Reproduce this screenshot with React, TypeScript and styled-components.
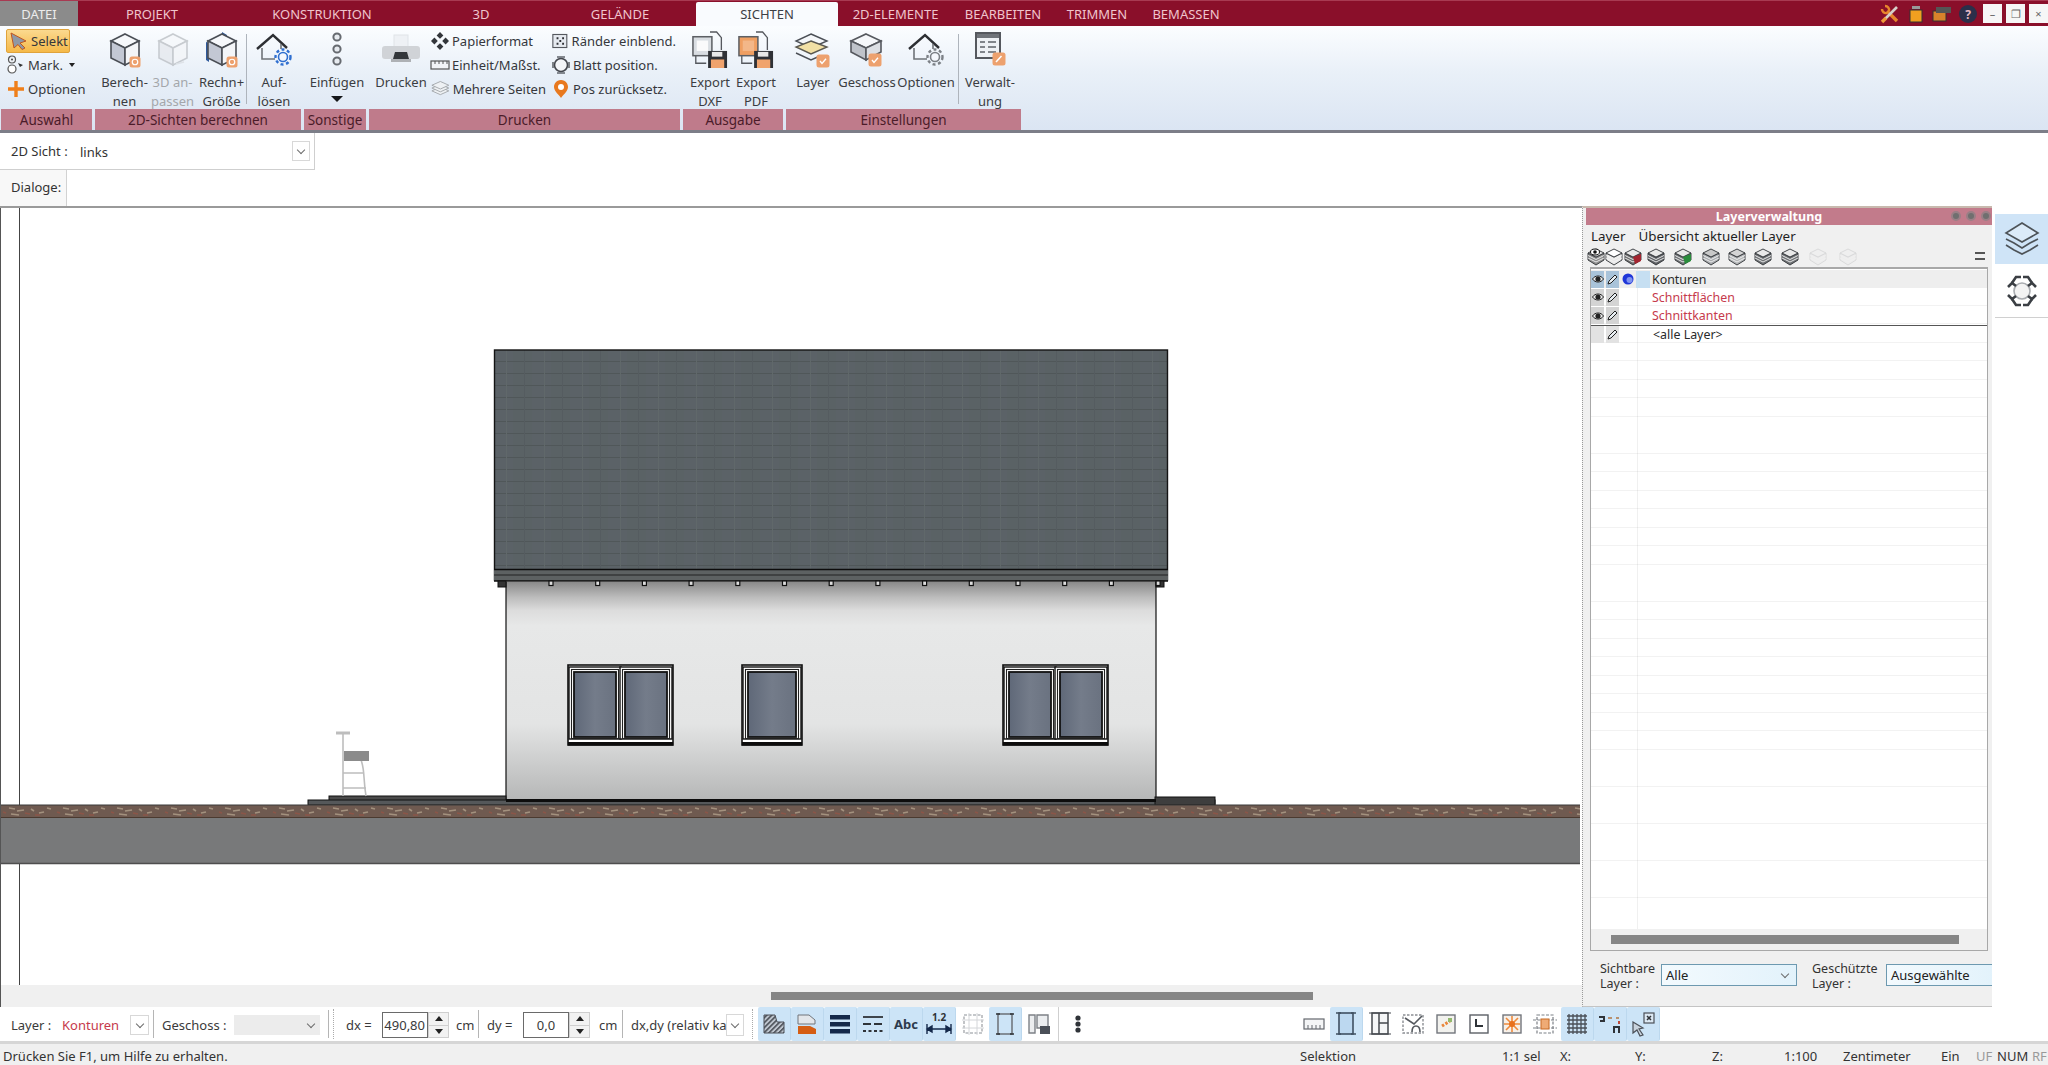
import React from 'react';
import styled, { createGlobalStyle } from 'styled-components';

const GlobalStyle = createGlobalStyle`
  html, body {
    margin: 0;
    padding: 0;
    background: #fff;
    overflow: hidden;
  }
  * { box-sizing: border-box; }
  body {
    font-family: "Noto Sans", "Open Sans", "Liberation Sans", sans-serif;
    font-size: 13px;
    color: #333;
  }
`;

/* ---------- ribbon icons ---------- */

const Badge = ({ x, y, r = 5.5, kind = 'ring' }: { x: number; y: number; r?: number; kind?: string }) => (
  <g>
    <rect x={x - r} y={y - r} width={r * 2} height={r * 2} rx={2.5} fill="#eda16e" />
    {kind === 'ring' && <circle cx={x} cy={y} r={r * 0.5} fill="none" stroke="#fff" strokeWidth={1.2} />}
    {kind === 'check' && <path d={`M${x - 3} ${y} l2 2.4 l4 -4.6`} fill="none" stroke="#fff" strokeWidth={1.4} />}
    {kind === 'pen' && <path d={`M${x - 3} ${y + 3} l5.5 -6`} fill="none" stroke="#fff" strokeWidth={1.6} />}
  </g>
);

const CubeIcon = ({ faded, wide }: { faded?: boolean; wide?: boolean }) => {
  const stroke = faded ? '#b9bdc2' : '#4b4f56';
  return (
    <svg width="38" height="38" viewBox="0 0 38 38" opacity={faded ? 0.75 : 1}>
      {wide && <path d="M19 1 L24 4 V8 L19 5Z M3 11 V29 L6 31 V12Z" fill="#2f5a9c" />}
      <path d="M19 3 L33 10 L19 17 L5 10Z" fill="#f6f8fb" stroke={stroke} strokeWidth="1.6" />
      <path d="M5 10 L19 17 V34 L5 27Z" fill={faded ? '#e5e8ed' : '#c3c8d4'} stroke={stroke} strokeWidth="1.6" />
      <path d="M33 10 L19 17 V34 L33 27Z" fill="#f3f5f8" stroke={stroke} strokeWidth="1.6" />
      {!faded && <Badge x={29} y={31} r={5.5} />}
      {faded && <path d="M22 33 l8 -2" stroke="#d9dde2" strokeWidth="1.5" />}
    </svg>
  );
};

const GearShape = ({ x, y, r, color }: { x: number; y: number; r: number; color: string }) => (
  <g fill="none" stroke={color} strokeWidth="1.6">
    <circle cx={x} cy={y} r={r} fill="#f5f8fd" />
    <circle cx={x} cy={y} r={r + 3} strokeDasharray="3 2.6" strokeWidth="2.4" />
  </g>
);

const HouseIcon = ({ gear }: { gear: string }) => (
  <svg width="38" height="38" viewBox="0 0 38 38">
    <path d="M2 18 L18 4 L32 17" fill="none" stroke="#2d2f33" strokeWidth="2.4" />
    <path d="M7 17 V28 H20 M26 13 V18" fill="none" stroke="#6f7378" strokeWidth="1.6" />
    <GearShape x={28} y={26} r={4.5} color={gear} />
  </svg>
);

const DotsIcon = () => (
  <svg width="14" height="38" viewBox="0 0 14 38">
    {[6, 18, 30].map(y => (
      <circle key={y} cx="7" cy={y} r="3.6" fill="#e7ebf0" stroke="#666a70" strokeWidth="2" />
    ))}
  </svg>
);

const PrinterIcon = () => (
  <svg width="42" height="38" viewBox="0 0 42 38">
    <rect x="14" y="4" width="14" height="16" fill="#eef1f5" stroke="#dfe3e8" />
    <rect x="2" y="15" width="38" height="13" rx="3" fill="#d0d3d7" />
    <path d="M13 28 L15 21 H27 L29 28Z" fill="#33363a" />
    <rect x="11" y="28" width="20" height="3" fill="#aeb1b5" />
  </svg>
);

const ExportIcon = ({ tint, label }: { tint: string; label: string }) => (
  <svg width="36" height="38" viewBox="0 0 38 40">
    <path d="M19 1 H26 L31 7 V20 M4 24 V34 H15" fill="none" stroke="#55585e" strokeWidth="1.4" />
    <rect x="1" y="6" width="20" height="20" fill={tint} stroke="#5c5f64" strokeWidth="1.6" />
    <rect x="5" y="10" width="12" height="11" fill="#fff" opacity={label === 'D' ? 0.85 : 0.25} />
    <rect x="17" y="21" width="20" height="18" fill="#2f3136" />
    <rect x="20" y="30" width="14" height="9" fill="#f0a36d" />
    <rect x="21" y="22" width="11" height="5" fill="#e8e8e8" />
  </svg>
);

const LayerBigIcon = () => (
  <svg width="38" height="38" viewBox="0 0 38 38">
    <path d="M17 3 L33 10 L17 17 L2 10Z" fill="#f5f7fa" stroke="#4b4f56" strokeWidth="1.4" />
    <path d="M17 10 L33 16 L17 23 L2 16Z" fill="#f2e0a5" stroke="#5a5850" strokeWidth="1.4" />
    <path d="M2 22 L17 29 L26 25" fill="none" stroke="#4b4f56" strokeWidth="1.4" />
    <Badge x={29} y={30} r={6.5} kind="check" />
  </svg>
);

const FloorIcon = () => (
  <svg width="38" height="38" viewBox="0 0 38 38">
    <path d="M18 3 L33 10 L18 17 L3 10Z" fill="#f5f7fa" stroke="#55585e" strokeWidth="1.6" />
    <path d="M3 10 V21 L18 29 V17Z" fill="#bfc3ca" stroke="#55585e" strokeWidth="1.6" />
    <path d="M33 10 V21 L18 29 V17Z" fill="#dcdfe4" stroke="#55585e" strokeWidth="1.6" />
    <Badge x={27} y={29} r={6.5} kind="check" />
  </svg>
);

const ManageIcon = () => (
  <svg width="38" height="38" viewBox="0 0 38 38">
    <rect x="5" y="2" width="24" height="25" fill="#eef1f5" stroke="#55585e" strokeWidth="2" />
    <rect x="6" y="3" width="22" height="4" fill="#70747a" />
    {[11, 16, 21].map(y => (
      <path key={y} d={`M9 ${y} h5 M17 ${y} h8`} stroke="#5e6268" strokeWidth="1.6" />
    ))}
    <Badge x={28} y={28} r={6.5} kind="pen" />
  </svg>
);

const SmallIcon = ({ kind }: { kind: string }) => {
  switch (kind) {
    case 'cursor':
      return (
        <svg width="20" height="20" viewBox="0 0 20 20">
          <path d="M2 2 L17 10 L11 12 L16 17 L13 18.5 L9 13.5 L5 17Z" fill="#8f98a4" stroke="#c0561e" strokeWidth="1" />
        </svg>
      );
    case 'mark':
      return (
        <svg width="20" height="20" viewBox="0 0 20 20">
          <circle cx="6" cy="4.5" r="3.5" fill="#eef1f5" stroke="#555" strokeWidth="1.2" />
          <circle cx="6" cy="4.5" r="1" fill="#444" />
          <circle cx="6" cy="14" r="4" fill="#fff" stroke="#555" strokeWidth="1.2" />
          <path d="M12 8 l5 2 l-3 2Z" fill="#333" />
        </svg>
      );
    case 'plus':
      return (
        <svg width="20" height="20" viewBox="0 0 20 20">
          <path d="M10 2 V18 M2 10 H18" stroke="#ef7f1a" strokeWidth="3.4" />
        </svg>
      );
    case 'format':
      return (
        <svg width="20" height="20" viewBox="0 0 20 20">
          <path d="M10 1 l3.4 3.4 l-3.4 3.4 l-3.4 -3.4Z M10 12.2 l3.4 3.4 l-3.4 3.4 l-3.4 -3.4Z M4.4 6.6 l3.4 3.4 l-3.4 3.4 l-3.4 -3.4Z M15.6 6.6 l3.4 3.4 l-3.4 3.4 l-3.4 -3.4Z" fill="#33363b" />
        </svg>
      );
    case 'ruler':
      return (
        <svg width="20" height="20" viewBox="0 0 20 20">
          <rect x="1" y="6" width="18" height="8" fill="#f2f4f7" stroke="#555" strokeWidth="1.2" />
          <path d="M5 6 v3 M9 6 v3 M13 6 v3 M17 6 v3" stroke="#555" />
        </svg>
      );
    case 'pages':
      return (
        <svg width="22" height="20" viewBox="0 0 22 20">
          {[11, 8, 5].map(y => (
            <path key={y} d={`M11 ${y - 3} L20 ${y + 1} L11 ${y + 5} L2 ${y + 1}Z`} fill="#eef1f4" stroke="#a3a7ac" />
          ))}
        </svg>
      );
    case 'margins':
      return (
        <svg width="20" height="20" viewBox="0 0 20 20">
          <rect x="2" y="3" width="15" height="14" fill="#e6eaf0" stroke="#55585e" strokeWidth="1.2" />
          <path d="M6 7 h2 M12 7 h2 M6 13 h2 M12 13 h2 M10 9 v2" stroke="#2f3136" strokeWidth="2" />
        </svg>
      );
    case 'position':
      return (
        <svg width="20" height="20" viewBox="0 0 20 20">
          <circle cx="10" cy="10" r="6.5" fill="#f3f5f8" stroke="#44474d" strokeWidth="1.6" />
          <path d="M6 2 h8 M2 7 v6 M18 7 v6 M6 18 h8" stroke="#62666c" strokeWidth="1.6" />
        </svg>
      );
    default:
      return (
        <svg width="20" height="20" viewBox="0 0 20 20">
          <path d="M10 1 C5 1 3 5 3 8 C3 12 8 16 10 19 C12 16 17 12 17 8 C17 5 15 1 10 1Z" fill="#e8781e" />
          <circle cx="10" cy="8" r="3" fill="#fff" />
        </svg>
      );
  }
};

/* ---------- bottom toolbar icons ---------- */

const ToolGlyph = ({ kind }: { kind: string }) => {
  const g = '#64686e';
  const d = '#2f3338';
  switch (kind) {
    case 'hatch':
      return (
        <svg width="22" height="22" viewBox="0 0 22 22">
          <defs>
            <pattern id="hatchfill" width="3.5" height="3.5" patternUnits="userSpaceOnUse" patternTransform="rotate(45)">
              <rect width="3.5" height="3.5" fill="#bcc3cc" />
              <rect width="1.4" height="3.5" fill="#3d4249" />
            </pattern>
          </defs>
          <path d="M1 2 H12 L14 9 H21 V20 H1Z" fill="url(#hatchfill)" stroke="#4b4f56" />
        </svg>
      );
    case 'fill':
      return (
        <svg width="22" height="22" viewBox="0 0 22 22">
          <path d="M2 2 H13 L19 7 V11 H2Z" fill="#e3e6ea" stroke="#70747a" />
          <path d="M2 13 H14 L20 16 V21 H2Z" fill="#d55e14" />
        </svg>
      );
    case 'thick':
      return (
        <svg width="22" height="20" viewBox="0 0 22 20">
          <rect x="1" y="1" width="20" height="4.5" fill="#15294a" />
          <rect x="1" y="8" width="20" height="4.5" fill="#15294a" />
          <rect x="1" y="15" width="20" height="4.5" fill="#15294a" />
        </svg>
      );
    case 'dash':
      return (
        <svg width="22" height="20" viewBox="0 0 22 20">
          <path d="M1 3 H21" stroke={d} strokeWidth="1.8" />
          <path d="M1 10 H21" stroke={d} strokeWidth="1.8" strokeDasharray="8 3" />
          <path d="M1 17 H21" stroke={d} strokeWidth="1.8" strokeDasharray="3 2.5" />
        </svg>
      );
    case 'dim':
      return (
        <svg width="28" height="26" viewBox="0 0 28 26">
          <text x="14" y="10" textAnchor="middle" fontSize="10" fontFamily="Noto Sans" fill="#2f3338">1.2</text>
          <path d="M2 13 V23 M26 13 V23 M2 18 H26 M2 18 l5 -3 v6Z M26 18 l-5 -3 v6Z" stroke="#15294a" strokeWidth="1.4" fill="#15294a" />
        </svg>
      );
    case 'frameFaded':
      return (
        <svg width="24" height="24" viewBox="0 0 24 24">
          <rect x="3" y="3" width="18" height="18" fill="none" stroke="#b3b6ba" strokeWidth="1.6" strokeDasharray="3 1.5" />
          <path d="M1 8 H23 M1 16 H23 M8 1 V23 M16 1 V23" stroke="#d4d6d9" />
        </svg>
      );
    case 'frame':
      return (
        <svg width="20" height="24" viewBox="0 0 20 24">
          <rect x="3" y="2" width="14" height="20" fill="none" stroke={g} strokeWidth="1.4" />
          <path d="M1 2 H5 M15 2 H19 M1 22 H5 M15 22 H19" stroke={d} strokeWidth="1.4" />
        </svg>
      );
    case 'sheets':
      return (
        <svg width="24" height="24" viewBox="0 0 24 24">
          <path d="M2 3 H8 V21 H2Z M10 3 H21 V16 H10Z" fill="#eceef0" stroke="#7d8187" strokeWidth="1.4" />
          <rect x="13" y="14" width="10" height="8" fill="#4b5058" />
        </svg>
      );
    case 'grip':
      return (
        <svg width="8" height="18" viewBox="0 0 8 18">
          {[3, 9, 15].map(y => <circle key={y} cx="4" cy={y} r="2.6" fill="#2f3338" />)}
        </svg>
      );
    case 'rule':
      return (
        <svg width="22" height="14" viewBox="0 0 22 14">
          <rect x="1" y="2" width="20" height="10" fill="#f4f5f6" stroke={g} strokeWidth="1.2" />
          <path d="M5 8 v4 M9 8 v4 M13 8 v4 M17 8 v4" stroke={g} />
        </svg>
      );
    case 'page':
      return (
        <svg width="22" height="26" viewBox="0 0 22 26">
          <rect x="4" y="2" width="14" height="21" fill="#bcd8f0" stroke="#3f5062" strokeWidth="1.6" />
          <path d="M1 2 H6 M16 2 H21 M1 23 H6 M16 23 H21" stroke="#3f5062" strokeWidth="1.6" />
        </svg>
      );
    case 'plan':
      return (
        <svg width="24" height="26" viewBox="0 0 24 26">
          <path d="M4 2 H20 V23 H4Z M11 2 V23 M11 12 H20" fill="#f5f6f7" stroke="#44484e" strokeWidth="1.5" />
          <path d="M1 2 H23 M1 23 H23" stroke="#44484e" strokeWidth="1.2" />
        </svg>
      );
    case 'arc':
      return (
        <svg width="26" height="24" viewBox="0 0 26 24">
          <path d="M3 3 H23 V21 H3Z" fill="none" stroke="#8a8d92" strokeDasharray="2.5 1.5" strokeWidth="1.4" />
          <path d="M5 6 L14 12 L22 4 M12 20 C12 12 20 12 20 20" fill="none" stroke="#54585e" strokeWidth="1.6" />
        </svg>
      );
    case 'img':
      return (
        <svg width="24" height="24" viewBox="0 0 24 24">
          <rect x="3" y="3" width="18" height="18" fill="#f2f2ee" stroke="#72767c" strokeWidth="1.4" />
          <path d="M8 14 L16 9" stroke="#e9863a" strokeWidth="3" strokeDasharray="2.5 1.5" />
          <rect x="14" y="6" width="4" height="4" fill="#93b96f" />
        </svg>
      );
    case 'corner':
      return (
        <svg width="24" height="24" viewBox="0 0 24 24">
          <rect x="3" y="3" width="18" height="18" fill="#fff" stroke="#5c6066" strokeWidth="1.4" />
          <path d="M9 7 V14 H16" fill="none" stroke="#2f3338" strokeWidth="2" />
        </svg>
      );
    case 'burst':
      return (
        <svg width="24" height="24" viewBox="0 0 24 24">
          <rect x="3" y="3" width="18" height="18" fill="#f7f0e8" stroke="#72767c" strokeWidth="1.4" />
          <path d="M12 4 V20 M4 12 H20 M6 6 L18 18 M18 6 L6 18" stroke="#ee8a3c" strokeWidth="1.6" />
          <circle cx="12" cy="12" r="3" fill="#e8701c" />
        </svg>
      );
    case 'target':
      return (
        <svg width="26" height="24" viewBox="0 0 26 24">
          <path d="M5 3 H21 V21 H5Z M1 8 H25 M1 16 H25" fill="none" stroke="#7d8187" strokeWidth="1.2" strokeDasharray="3 1.5" />
          <rect x="9" y="7" width="8" height="10" fill="#efab75" stroke="#c76a24" />
        </svg>
      );
    case 'grid':
      return (
        <svg width="24" height="24" viewBox="0 0 24 24">
          <path d="M2 4 H22 M2 8 H22 M2 12 H22 M2 16 H22 M2 20 H22 M4 2 V22 M8 2 V22 M12 2 V22 M16 2 V22 M20 2 V22" stroke="#4a4f57" strokeWidth="1.3" />
        </svg>
      );
    case 'snap':
      return (
        <svg width="26" height="24" viewBox="0 0 26 24">
          <path d="M2 5 H7 V9 H3" fill="none" stroke="#2f3338" strokeWidth="2" />
          <path d="M11 6 H15 M19 6 H22" stroke="#b7906f" strokeWidth="2" />
          <path d="M17 21 V15 H22 V21" fill="none" stroke="#2f3338" strokeWidth="2" />
          <path d="M22 9 V12" stroke="#c04a3a" strokeWidth="2" />
        </svg>
      );
    default:
      return (
        <svg width="26" height="26" viewBox="0 0 26 26">
          <path d="M3 11 L13 17 L9 18 L13 24 L10 25 L7 19 L3 22Z" fill="#c9d3dd" stroke="#4b5058" strokeWidth="1.2" />
          <rect x="14" y="2" width="10" height="10" fill="#dce8f3" stroke="#4b5058" strokeWidth="1.2" />
          <path d="M17 5 L21 9 M21 5 L17 9" stroke="#2f3338" strokeWidth="1.5" />
        </svg>
      );
  }
};

const StackTool = ({ tone, top, faded, accent, eye }: { tone: string; top?: string; faded?: boolean; accent?: string; eye?: boolean }) => (
  <svg width="20" height="20" viewBox="0 0 20 20" opacity={faded ? 0.12 : 1}>
    <path d="M2 7 V14 L10 19 L18 14 V7 L10 11Z" fill={tone} stroke="#2f3236" strokeWidth="0.9" />
    <path d="M2 9.5 L10 13.5 L18 9.5 M2 12 L10 16 L18 12" fill="none" stroke="#f4f4f4" strokeWidth="0.9" />
    <path d="M10 3 L18 7 L10 11 L2 7Z" fill={top ?? '#e9e9e9'} stroke="#2f3236" strokeWidth="0.9" />
    {accent && <path d="M10 11 L18 8 V15 L12 18Z" fill={accent} />}
    {eye && (
      <g>
        <ellipse cx="9" cy="6" rx="4.5" ry="3" fill="#fff" stroke="#111" />
        <circle cx="9" cy="6" r="1.8" fill="#111" />
      </g>
    )}
  </svg>
);

/* ---------- tab bar ---------- */

const TabBar = styled.div`
  height: 26px;
  display: flex;
  align-items: stretch;
  background: #8a0f2a;
  border-top: 1px solid #a83a52;
`;

const Tab = styled.div<{ $w: number; $variant?: string }>`
  width: ${p => p.$w}px;
  display: flex;
  align-items: center;
  justify-content: center;
  font-size: 13px;
  white-space: nowrap;
  color: ${p => (p.$variant === 'active' ? '#3d3f45' : '#f0c4cd')};
  background: ${p =>
    p.$variant === 'file' ? '#8b8b8b' : p.$variant === 'active' ? '#f9fbfe' : 'transparent'};
  ${p => p.$variant === 'file' && 'color: #ececec;'}
  ${p => p.$variant === 'active' && 'border-radius: 2px 2px 0 0; margin-top: 1px;'}
`;

const WindowTools = styled.div`
  margin-left: auto;
  display: flex;
  align-items: center;
  gap: 4px;
`;

const TopGlyph = styled.span`
  width: 22px;
  height: 22px;
  display: flex;
  align-items: center;
  justify-content: center;
`;

const WinButton = styled.span`
  width: 19px;
  height: 19px;
  background: #f6f6f6;
  color: #666;
  font-size: 11px;
  display: flex;
  align-items: center;
  justify-content: center;
  line-height: 1;
`;

/* ---------- ribbon ---------- */

const Ribbon = styled.div`
  height: 107px;
  display: flex;
  padding-left: 1px;
  gap: 3px;
  background: linear-gradient(#fbfdff 0%, #e9f0f8 45%, #dbe5f3 100%);
  border-bottom: 3px solid #7c7e88;
`;

const Group = styled.div<{ $w: number }>`
  width: ${p => p.$w}px;
  display: flex;
  flex-direction: column;
`;

const GroupBody = styled.div<{ $pad?: number }>`
  height: 83px;
  display: flex;
  padding-left: ${p => p.$pad ?? 0}px;
`;

const GroupLabel = styled.div`
  height: 21px;
  background: #bf7b8b;
  color: #4b1b29;
  font-size: 13.5px;
  display: flex;
  align-items: center;
  justify-content: center;
`;

const BigButton = styled.div<{ $w: number; $faded?: boolean }>`
  width: ${p => p.$w}px;
  flex: none;
  display: flex;
  flex-direction: column;
  align-items: center;
  padding-top: 5px;
  font-size: 13px;
  line-height: 18.5px;
  text-align: center;
  color: ${p => (p.$faded ? '#a4a7ab' : '#3b3d42')};
  svg { flex: none; margin-bottom: 3px; }
`;

const ButtonCaption = styled.div`
  margin-top: auto;
  margin-bottom: -1px;
  white-space: pre-line;
  height: 37px;
`;

const Divider = styled.div`
  width: 1px;
  height: 70px;
  margin-top: 8px;
  background: #aeb4bc;
  flex: none;
`;

const SmallColumn = styled.div<{ $w: number; $pull?: number }>`
  width: ${p => p.$w}px;
  margin-left: ${p => -(p.$pull ?? 0)}px;
  flex: none;
  display: flex;
  flex-direction: column;
  padding-top: 3px;
`;

const SmallRow = styled.div<{ $selected?: boolean }>`
  height: 24px;
  display: flex;
  align-items: center;
  gap: 2px;
  font-size: 13px;
  white-space: nowrap;
  color: #35373c;
  padding-left: 5px;
  ${p =>
    p.$selected &&
    `
    background: linear-gradient(#fbd98f, #f5b949);
    border: 1px solid #e0a33b;
    border-radius: 2px;
    margin-left: 5px;
    padding-left: 2px;
    width: 64px;
  `}
`;

const Caret = styled.span`
  width: 0;
  height: 0;
  margin-left: 4px;
  border-left: 3px solid transparent;
  border-right: 3px solid transparent;
  border-top: 4px solid #222;
`;

const BigCaret = styled.div`
  width: 0;
  height: 0;
  margin: 4px auto 0;
  border-left: 6px solid transparent;
  border-right: 6px solid transparent;
  border-top: 6px solid #16181b;
`;

/* ---------- option rows ---------- */

const SichtRow = styled.div`
  width: 315px;
  height: 37px;
  display: flex;
  align-items: center;
  padding: 0 4px 0 11px;
  border-right: 1px solid #cfcfcf;
  border-bottom: 1px solid #cfcfcf;
`;

const SichtLabel = styled.span`
  width: 69px;
`;

const SichtValue = styled.span`
  flex: 1;
  padding-top: 2px;
`;

const Chevron = styled.span<{ $w?: number; $h?: number; $borderless?: boolean }>`
  width: ${p => p.$w ?? 18}px;
  height: ${p => p.$h ?? 20}px;
  flex: none;
  display: flex;
  align-items: center;
  justify-content: center;
  background: transparent;
  border: ${p => (p.$borderless ? 'none' : '1px solid #d8d8d8')};
  &::before {
    content: '';
    width: 5px;
    height: 5px;
    margin-top: -3px;
    border-right: 1px solid #6c6c6c;
    border-bottom: 1px solid #6c6c6c;
    transform: rotate(45deg);
  }
`;

const DialogRow = styled.div`
  width: 67px;
  height: 36px;
  display: flex;
  align-items: center;
  padding: 0 0 2px 11px;
  background: #f8f8f8;
  border-right: 1px solid #d2d2d2;
`;

/* ---------- main area ---------- */

const Main = styled.div`
  height: 801px;
  display: flex;
`;

const CanvasColumn = styled.div`
  width: 1582px;
  flex: none;
  display: flex;
  flex-direction: column;
  border-top: 2px solid #9a9a9a;
`;

const Canvas = styled.div`
  height: 777px;
  flex: none;
  background: #fff;
  border-left: 1px solid #555;
  svg { display: block; }
`;

const HScroll = styled.div`
  flex: 1;
  display: flex;
  align-items: center;
  background: #f0f0f0;
  border-left: 1px solid #555;
  padding-left: 770px;
`;

const HThumb = styled.div`
  width: 542px;
  height: 8px;
  background: #868686;
`;

const LayerPanel = styled.div`
  width: 410px;
  flex: none;
  display: flex;
  flex-direction: column;
  padding-left: 3px;
  border-left: 1px dotted #999;
  border-top: 2px solid #c8b9ae;
  border-bottom: 1px solid #c4c4c4;
  background: #f0f0f0;
`;

const PanelTitle = styled.div`
  height: 17px;
  flex: none;
  display: flex;
  align-items: center;
  justify-content: center;
  position: relative;
  padding-right: 40px;
  background: #c27b8b;
  color: #fff;
  font-weight: 700;
  font-size: 12.5px;
`;

const TitleDots = styled.div`
  position: absolute;
  right: 1px;
  top: 3px;
  display: flex;
  gap: 5px;
`;

const TitleDot = styled.span`
  width: 10px;
  height: 10px;
  border-radius: 50%;
  background: #6f6f6f;
  border: 2px solid #9a7f86;
`;

const PanelTabs = styled.div`
  height: 21px;
  flex: none;
  display: flex;
  align-items: center;
  padding-left: 5px;
  gap: 13px;
  color: #1f1f1f;
  font-size: 13.4px;
`;

const PanelTools = styled.div`
  height: 20px;
  flex: none;
  display: grid;
  grid-template-columns: 19px 18px 19px 27px 27px 30px 22px 30px 23px 33px 27px 1fr 24px;
  justify-items: center;
  align-items: center;
`;

const MenuGlyph = styled.span`
  width: 10px;
  height: 8px;
  border-top: 2px solid #555;
  border-bottom: 2px solid #555;
`;

const LayerList = styled.div`
  flex: 1;
  margin: 1px 4px 0 4px;
  display: flex;
  flex-direction: column;
  border: 1px solid #a8a8a8;
  border-top-width: 2px;
  background: #f0f0f0;
`;

const ListBody = styled.div`
  flex: 1;
  padding-top: 1px;
  background-color: #fff;
  background-image:
    repeating-linear-gradient(#fff 0 17.5px, #f2f2f2 17.5px 18.5px),
    linear-gradient(90deg, transparent 46px, #f0f0f0 46px 47px, transparent 47px);
  background-blend-mode: multiply;
`;

const LayerRow = styled.div<{ $current?: boolean; $sep?: boolean }>`
  height: 18.3px;
  display: flex;
  align-items: center;
  font-size: 12.4px;
  background: ${p => (p.$current ? '#eeeeee' : 'transparent')};
  ${p => p.$sep && 'border-top: 1px solid #555;'}
`;

const StateCell = styled.span<{ $tone?: string }>`
  width: 13px;
  height: 17px;
  margin-right: 2px;
  flex: none;
  display: flex;
  align-items: center;
  justify-content: center;
  background: ${p => p.$tone ?? 'transparent'};
`;

const Swatch = styled.span<{ $color?: string }>`
  width: 14px;
  height: 17px;
  flex: none;
  background: ${p => p.$color ?? 'transparent'};
`;

const LayerName = styled.span<{ $red?: boolean; $shift?: number }>`
  margin-left: ${p => p.$shift ?? 2}px;
  color: ${p => (p.$red ? '#c63a4c' : '#2a2a2a')};
`;

const ListScroll = styled.div`
  height: 21px;
  flex: none;
  display: flex;
  align-items: center;
  padding-left: 20px;
`;

const ListThumb = styled.div`
  width: 348px;
  height: 9px;
  background: #868686;
`;

const PanelFooter = styled.div`
  height: 55px;
  flex: none;
  display: flex;
  align-items: flex-start;
  padding: 10px 0 0 14px;
  overflow: hidden;
`;

const FooterLabel = styled.div<{ $w: number }>`
  width: ${p => p.$w}px;
  flex: none;
  font-size: 12.5px;
  line-height: 15px;
  color: #333;
  white-space: pre-line;
`;

const FooterSelect = styled.div<{ $w: number; $open?: boolean }>`
  width: ${p => p.$w}px;
  height: 22px;
  flex: none;
  margin-top: 3px;
  display: flex;
  align-items: center;
  justify-content: space-between;
  padding: 0 4px;
  font-size: 13px;
  color: #222;
  background: linear-gradient(90deg, #f3fafe, #e2f2fb);
  border: 1px solid #6d99b0;
  ${p => p.$open && 'border-right: none;'}
`;

const FooterGap = styled.div`
  width: 15px;
  flex: none;
`;

const SideBar = styled.div`
  flex: 1;
  display: flex;
  flex-direction: column;
  padding-left: 3px;
  padding-top: 8px;
`;

const SideTile = styled.div<{ $active?: boolean; $h: number }>`
  height: ${p => p.$h}px;
  display: flex;
  align-items: center;
  justify-content: center;
  background: ${p => (p.$active ? '#cfe4f7' : 'transparent')};
  border-bottom: ${p => (p.$active ? 'none' : '1px solid #d0d0d0')};
`;

/* ---------- bottom toolbar ---------- */

const Toolbar = styled.div`
  height: 37px;
  display: flex;
  align-items: stretch;
  background: #fff;
  border-bottom: 3px solid #d6d6d6;
  font-size: 13px;
`;

const ToolSection = styled.div<{ $w: number; $line?: boolean; $pad?: number }>`
  width: ${p => p.$w}px;
  flex: none;
  display: flex;
  align-items: center;
  white-space: nowrap;
  overflow: hidden;
  padding-left: ${p => p.$pad ?? 0}px;
  padding-top: 2px;
  ${p => p.$line && 'border-right: 1px solid #b5b5b5; margin: 3px 0;'}
`;

const ToolLabel = styled.span<{ $w?: number; $red?: boolean; $gap?: number; $clip?: boolean }>`
  ${p => p.$w && `width: ${p.$w}px; flex: none;`}
  ${p => p.$gap && `margin-left: ${p.$gap}px;`}
  ${p => p.$clip && 'overflow: hidden;'}
  color: ${p => (p.$red ? '#c63a4c' : '#3a3a3a')};
`;

const Disabled = styled.div`
  width: 86px;
  height: 20px;
  flex: none;
  display: flex;
  justify-content: flex-end;
  background: #ececec;
`;

const NumBox = styled.div<{ $w: number; $center?: boolean }>`
  width: ${p => p.$w}px;
  height: 26px;
  flex: none;
  display: flex;
  align-items: center;
  justify-content: ${p => (p.$center ? 'center' : 'flex-end')};
  padding: 0 2px;
  border: 1px solid #6a6a6a;
  color: #3a3a3a;
  overflow: hidden;
`;

const Spinner = styled.div`
  width: 21px;
  height: 26px;
  flex: none;
  display: flex;
  flex-direction: column;
  gap: 1px;
  background: #cfcfcf;
  padding: 1px;
`;

const SpinPart = styled.span<{ $up?: boolean }>`
  flex: 1;
  background: #f2f2f2;
  display: flex;
  align-items: center;
  justify-content: center;
  &::before {
    content: '';
    border-left: 4px solid transparent;
    border-right: 4px solid transparent;
    ${p => (p.$up ? 'border-bottom: 5px solid #222;' : 'border-top: 5px solid #222;')}
  }
`;

const Grip = styled.div`
  width: 6px;
  flex: none;
  margin: 2px 0;
  border-left: 1px dotted #aaa;
  margin-left: 4px;
`;

const ToolButton = styled.div<{ $active?: boolean; $w?: number }>`
  width: ${p => p.$w ?? 33}px;
  flex: none;
  height: 34px;
  display: flex;
  align-items: center;
  justify-content: center;
  font-weight: 700;
  font-size: 13px;
  color: #2c3a4d;
  background: ${p => (p.$active ? '#cce4f7' : 'transparent')};
  border-right: ${p => (p.$active ? '1px solid #bcd8ee' : 'none')};
  border-radius: 2px;
`;

const ToolSpacer = styled.div<{ $w: number; $line?: boolean }>`
  width: ${p => p.$w}px;
  flex: none;
  ${p => p.$line && 'border-right: 1px solid #cfcfcf;'}
`;

/* ---------- status bar ---------- */

const StatusBar = styled.div`
  height: 21px;
  display: flex;
  align-items: center;
  padding-top: 2px;
  background: #f0f0f0;
  font-size: 13px;
  color: #333;
  overflow: hidden;
`;

const StatusCell = styled.span<{ $w: number; $muted?: boolean }>`
  width: ${p => p.$w}px;
  flex: none;
  white-space: nowrap;
  color: ${p => (p.$muted ? '#9a9a9a' : '#333')};
`;

/* ---------- elevation drawing, on the canvas coordinates ---------- */

const Casement = ({ x, w }: { x: number; w: number }) => (
  <g>
    <rect x={x} y={667} width={w} height={72} fill="#fff" stroke="#111" strokeWidth="1.4" />
    <rect x={x + 2.5} y={669.5} width={w - 5} height={69} fill="none" stroke="#222" strokeWidth="1.1" />
    <rect x={x + 5} y={672} width={w - 10} height={65} fill="url(#glass)" stroke="#111" strokeWidth="1.8" />
  </g>
);

const Opening = ({ x, leafs }: { x: number; leafs: number }) => {
  const w = leafs === 2 ? 105 : 60;
  const leaf = leafs === 2 ? 52 : 58;
  return (
    <g>
      <rect x={x} y={665} width={w} height={80} fill="#fff" stroke="#111" strokeWidth="1.6" />
      <Casement x={x + 1} w={leaf} />
      {leafs === 2 && <Casement x={x + 52} w={leaf} />}
      <rect x={x} y={742} width={w} height={3.5} fill="#0c0c0c" />
    </g>
  );
};

const brackets = Array.from({ length: 14 }, (_, i) => 548 + i * 46.7);

const HouseElevation = () => (
  <svg width="1581" height="777" viewBox="0 208 1581 777">
    <defs>
      <pattern id="tiles" width="38" height="12" patternUnits="userSpaceOnUse" x="493" y="350">
        <rect width="38" height="12" fill="#5a6265" />
        <rect width="19" height="12" fill="#5a6069" opacity="0.35" />
        <rect y="11" width="38" height="1" fill="#505759" />
        <rect x="12" width="1" height="12" fill="#60686a" />
        <rect x="30" width="1" height="12" fill="#555c60" />
      </pattern>
      <linearGradient id="wall" x1="0" y1="0" x2="0" y2="1">
        <stop offset="0" stopColor="#8a8a8a" />
        <stop offset="0.07" stopColor="#bcbcbc" />
        <stop offset="0.13" stopColor="#dcdcdc" />
        <stop offset="0.2" stopColor="#e7e8e8" />
        <stop offset="0.65" stopColor="#e3e4e4" />
        <stop offset="1" stopColor="#b6b7b7" />
      </linearGradient>
      <linearGradient id="glass" x1="0" y1="0" x2="1" y2="0">
        <stop offset="0" stopColor="#5f6878" />
        <stop offset="0.5" stopColor="#747c8a" />
        <stop offset="1" stopColor="#6a7280" />
      </linearGradient>
      <pattern id="soil" width="54" height="13" patternUnits="userSpaceOnUse" x="0" y="805">
        <rect width="54" height="13" fill="#6f5a50" />
        <path d="M8 3 l6 1 M16 6 l7 -1 M10 9 l8 1 M30 4 l3 2 M38 8 l5 -1 M46 3 l4 1" stroke="#a3917e" strokeWidth="1.6" />
        <path d="M24 8 l5 1 M2 7 l3 1 M34 10 l5 0" stroke="#8a5548" strokeWidth="1.4" />
      </pattern>
    </defs>

    <path d="M18.5 208 V985" stroke="#444" strokeWidth="1" />

    <rect x="505" y="582" width="650" height="218" fill="url(#wall)" />
    <path d="M505 582 V800 M1155 582 V800" stroke="#111" strokeWidth="1.2" />

    <rect x="493.5" y="350" width="673" height="230" fill="url(#tiles)" stroke="#141414" strokeWidth="1.4" />
    <rect x="493" y="569" width="674" height="12" fill="#5d6162" />
    <path d="M493 569.5 H1167" stroke="#0c0c0c" strokeWidth="1.6" />
    <path d="M493 575 H1167" stroke="#222" strokeWidth="1.1" />
    <path d="M493 581 H1167" stroke="#0c0c0c" strokeWidth="1.6" />
    <rect x="497" y="581" width="8" height="6" fill="#333" stroke="#111" />
    <rect x="1155" y="581" width="8" height="6" fill="#333" stroke="#111" />
    {brackets.map(x => (
      <rect key={x} x={x} y={581} width={4} height={4.5} fill="#ddd" stroke="#111" strokeWidth="1.2" />
    ))}

    <Opening x={567} leafs={2} />
    <Opening x={741} leafs={1} />
    <Opening x={1002} leafs={2} />

    <rect x="328" y="796" width="177" height="5" fill="#4a4a4a" stroke="#111" />
    <rect x="307" y="800" width="907" height="5" fill="#55585a" stroke="#111" />
    <rect x="1154" y="797" width="60" height="8" fill="#3e3e3e" stroke="#111" />
    <rect x="505" y="799" width="650" height="3" fill="#0d0d0d" />

    <g stroke="#bdbdbd" fill="none" strokeWidth="1.6">
      <path d="M342 733 V796 M360 760 C364 770 362 778 365 796 M342 773 H362 M342 788 H365" />
      <path d="M335 733 H349" strokeWidth="3" />
    </g>
    <rect x="343" y="751" width="25" height="10" fill="#8b8b8b" />

    <rect x="0" y="805" width="1579" height="12" fill="url(#soil)" />
    <rect x="0" y="817" width="1579" height="46" fill="#78797a" />
    <path d="M0 805 H1579" stroke="#3b3b3b" strokeWidth="1.2" />
    <path d="M0 817.5 H1579" stroke="#4b3a30" strokeWidth="1.2" />
    <path d="M0 863.5 H1579" stroke="#4e4e4e" strokeWidth="1.6" />
  </svg>
);

const Eye = () => (
  <svg width="12" height="10" viewBox="0 0 12 10">
    <path d="M0.5 5 C3 1 9 1 11.5 5 C9 9 3 9 0.5 5Z" fill="#eee" stroke="#222" />
    <circle cx="6" cy="5" r="2.6" fill="#222" />
  </svg>
);

const Pencil = () => (
  <svg width="11" height="11" viewBox="0 0 11 11">
    <path d="M1 10 L2 7 L8 1 L10 3 L4 9Z" fill="#e8eef2" stroke="#222" strokeWidth="1" />
  </svg>
);

const layerRows = [
  { name: 'Schnittflächen', red: true },
  { name: 'Schnittkanten', red: true },
];

const leftTools = [
  { k: 'hatch', a: true },
  { k: 'fill', a: true },
  { k: 'thick', a: true },
  { k: 'dash', a: true },
  { k: 'abc', a: true },
  { k: 'dim', a: true },
  { k: 'frameFaded', a: false },
  { k: 'frame', a: true },
  { k: 'sheets', a: false },
];

const rightTools = [
  { k: 'rule', a: false },
  { k: 'page', a: true },
  { k: 'plan', a: false },
  { k: 'arc', a: false },
  { k: 'img', a: false },
  { k: 'corner', a: false },
  { k: 'burst', a: false },
  { k: 'target', a: false },
  { k: 'grid', a: true },
  { k: 'snap', a: true },
  { k: 'pick', a: true },
];

export default function App() {
  return (
    <>
      <GlobalStyle />
      <TabBar>
        <Tab $w={78} $variant="file">DATEI</Tab>
        <Tab $w={148}>PROJEKT</Tab>
        <Tab $w={192}>KONSTRUKTION</Tab>
        <Tab $w={126}>3D</Tab>
        <Tab $w={152}>GELÄNDE</Tab>
        <Tab $w={142} $variant="active">SICHTEN</Tab>
        <Tab $w={115}>2D-ELEMENTE</Tab>
        <Tab $w={100}>BEARBEITEN</Tab>
        <Tab $w={88}>TRIMMEN</Tab>
        <Tab $w={90}>BEMASSEN</Tab>
        <WindowTools>
          <TopGlyph>
            <svg width="20" height="20" viewBox="0 0 20 20">
              <path d="M7 7 L17 17" stroke="#e8862d" strokeWidth="3.4" />
              <path d="M2 5 A4 4 0 0 0 7 9 M5 2 A4 4 0 0 1 9 7" fill="none" stroke="#e8862d" strokeWidth="2.4" />
              <path d="M17 3 L5 15" stroke="#d6d0c8" strokeWidth="2.6" />
              <path d="M6 14 L2 18" stroke="#ef9a3a" strokeWidth="3.4" />
            </svg>
          </TopGlyph>
          <TopGlyph>
            <svg width="16" height="18" viewBox="0 0 16 18">
              <rect x="2" y="5" width="12" height="12" fill="#f0a020" stroke="#333" />
              <rect x="4" y="1" width="8" height="3" fill="#999" />
            </svg>
          </TopGlyph>
          <TopGlyph>
            <svg width="20" height="16" viewBox="0 0 20 16">
              <rect x="1" y="5" width="13" height="10" fill="#d9822b" stroke="#333" />
              <rect x="4" y="1" width="15" height="6" fill="#555" />
            </svg>
          </TopGlyph>
          <TopGlyph>
            <svg width="20" height="20" viewBox="0 0 20 20">
              <circle cx="10" cy="10" r="9" fill="#2b2f4a" />
              <text x="10" y="14.5" textAnchor="middle" fontSize="12" fontWeight="700" fontFamily="Noto Sans" fill="#e8b9c4">?</text>
            </svg>
          </TopGlyph>
          <WinButton>–</WinButton>
          <WinButton>❐</WinButton>
          <WinButton>×</WinButton>
        </WindowTools>
      </TabBar>

      <Ribbon>
        <Group $w={91}>
          <GroupBody>
            <SmallColumn $w={91}>
              <SmallRow $selected><SmallIcon kind="cursor" />Selekt</SmallRow>
              <SmallRow><SmallIcon kind="mark" />Mark.<Caret /></SmallRow>
              <SmallRow><SmallIcon kind="plus" />Optionen</SmallRow>
            </SmallColumn>
          </GroupBody>
          <GroupLabel>Auswahl</GroupLabel>
        </Group>
        <Group $w={206}>
          <GroupBody $pad={6}>
            <BigButton $w={47}><CubeIcon /><ButtonCaption>{'Berech-\nnen'}</ButtonCaption></BigButton>
            <BigButton $w={49} $faded><CubeIcon faded /><ButtonCaption>{'3D an-\npassen'}</ButtonCaption></BigButton>
            <BigButton $w={49}><CubeIcon wide /><ButtonCaption>{'Rechn+\nGröße'}</ButtonCaption></BigButton>
            <Divider />
            <BigButton $w={54}><HouseIcon gear="#2f6fd0" /><ButtonCaption>{'Auf-\nlösen'}</ButtonCaption></BigButton>
          </GroupBody>
          <GroupLabel>2D-Sichten berechnen</GroupLabel>
        </Group>
        <Group $w={62}>
          <GroupBody $pad={4}>
            <BigButton $w={58}>
              <DotsIcon />
              <ButtonCaption>Einfügen<BigCaret /></ButtonCaption>
            </BigButton>
          </GroupBody>
          <GroupLabel>Sonstige</GroupLabel>
        </Group>
        <Group $w={311}>
          <GroupBody $pad={3}>
            <BigButton $w={58}><PrinterIcon /><ButtonCaption>Drucken</ButtonCaption></BigButton>
            <SmallColumn $w={121} $pull={5}>
              <SmallRow><SmallIcon kind="format" />Papierformat</SmallRow>
              <SmallRow><SmallIcon kind="ruler" />Einheit/Maßst.</SmallRow>
              <SmallRow><SmallIcon kind="pages" />Mehrere Seiten</SmallRow>
            </SmallColumn>
            <SmallColumn $w={130}>
              <SmallRow><SmallIcon kind="margins" />Ränder einblend.</SmallRow>
              <SmallRow><SmallIcon kind="position" />Blatt position.</SmallRow>
              <SmallRow><SmallIcon kind="pin" />Pos zurücksetz.</SmallRow>
            </SmallColumn>
          </GroupBody>
          <GroupLabel>Drucken</GroupLabel>
        </Group>
        <Group $w={100}>
          <GroupBody $pad={4}>
            <BigButton $w={46}><ExportIcon tint="#d9dde2" label="D" /><ButtonCaption>{'Export\nDXF'}</ButtonCaption></BigButton>
            <BigButton $w={46}><ExportIcon tint="#ef9f62" label="P" /><ButtonCaption>{'Export\nPDF'}</ButtonCaption></BigButton>
          </GroupBody>
          <GroupLabel>Ausgabe</GroupLabel>
        </Group>
        <Group $w={235}>
          <GroupBody>
            <BigButton $w={54}><LayerBigIcon /><ButtonCaption>Layer</ButtonCaption></BigButton>
            <BigButton $w={54}><FloorIcon /><ButtonCaption>Geschoss</ButtonCaption></BigButton>
            <BigButton $w={64}><HouseIcon gear="#7c8086" /><ButtonCaption>Optionen</ButtonCaption></BigButton>
            <Divider />
            <BigButton $w={62}><ManageIcon /><ButtonCaption>{'Verwalt-\nung'}</ButtonCaption></BigButton>
          </GroupBody>
          <GroupLabel>Einstellungen</GroupLabel>
        </Group>
      </Ribbon>

      <SichtRow>
        <SichtLabel>2D Sicht :</SichtLabel>
        <SichtValue>links</SichtValue>
        <Chevron />
      </SichtRow>
      <DialogRow>Dialoge:</DialogRow>

      <Main>
        <CanvasColumn>
          <Canvas><HouseElevation /></Canvas>
          <HScroll><HThumb /></HScroll>
        </CanvasColumn>

        <LayerPanel>
          <PanelTitle>
            Layerverwaltung
            <TitleDots><TitleDot /><TitleDot /><TitleDot /></TitleDots>
          </PanelTitle>
          <PanelTabs>
            <span>Layer</span>
            <span>Übersicht aktueller Layer</span>
          </PanelTabs>
          <PanelTools>
            <StackTool tone="#8d8d8d" eye />
            <StackTool tone="#e8e8e8" top="#fff" />
            <StackTool tone="#6d6d6d" accent="#a3242f" />
            <StackTool tone="#5f6266" />
            <StackTool tone="#6f7275" accent="#2a8c3c" />
            <StackTool tone="#a8abae" top="#c8c8c8" />
            <StackTool tone="#b4b6b8" top="#d4d4d4" />
            <StackTool tone="#6f7275" />
            <StackTool tone="#6f7275" />
            <StackTool tone="#ddd" faded />
            <StackTool tone="#ddd" faded />
            <span />
            <MenuGlyph />
          </PanelTools>
          <LayerList>
            <ListBody>
              <LayerRow $current>
                <StateCell $tone="#a9c3d9"><Eye /></StateCell>
                <StateCell $tone="#a9c3d9"><Pencil /></StateCell>
                <StateCell>
                  <svg width="12" height="12" viewBox="0 0 12 12">
                    <circle cx="6" cy="6" r="5.5" fill="#1f36d8" />
                    <circle cx="7.5" cy="7" r="3" fill="#7f93f0" />
                  </svg>
                </StateCell>
                <Swatch $color="#c6dff2" />
                <LayerName>Konturen</LayerName>
              </LayerRow>
              {layerRows.map(r => (
                <LayerRow key={r.name}>
                  <StateCell $tone="#d4d4d4"><Eye /></StateCell>
                  <StateCell $tone="#d4d4d4"><Pencil /></StateCell>
                  <StateCell />
                  <Swatch />
                  <LayerName $red={r.red}>{r.name}</LayerName>
                </LayerRow>
              ))}
              <LayerRow $sep>
                <StateCell $tone="#e2e2e2" />
                <StateCell $tone="#e2e2e2"><Pencil /></StateCell>
                <StateCell />
                <Swatch />
                <LayerName $shift={3}>{'<alle Layer>'}</LayerName>
              </LayerRow>
            </ListBody>
            <ListScroll><ListThumb /></ListScroll>
          </LayerList>
          <PanelFooter>
            <FooterLabel $w={61}>{'Sichtbare\nLayer :'}</FooterLabel>
            <FooterSelect $w={136}>Alle<Chevron $w={14} $h={14} $borderless /></FooterSelect>
            <FooterGap />
            <FooterLabel $w={74}>{'Geschützte\nLayer :'}</FooterLabel>
            <FooterSelect $w={110} $open>Ausgewählte</FooterSelect>
          </PanelFooter>
        </LayerPanel>

        <SideBar>
          <SideTile $active $h={50}>
            <svg width="36" height="36" viewBox="0 0 36 36" fill="none" stroke="#4d5358" strokeWidth="1.6">
              <path d="M18 2 L34 12 L18 21 L2 12Z" fill="#dcebf8" />
              <path d="M2 18 L10 22 L18 27 L26 22 L34 18" />
              <path d="M2 24 L10 29 L18 33 L26 29 L34 24" />
            </svg>
          </SideTile>
          <SideTile $h={54}>
            <svg width="34" height="34" viewBox="0 0 34 34" fill="none" stroke="#3b3f44" strokeWidth="2.6">
              <circle cx="17" cy="17" r="8" stroke="#a9acb0" strokeWidth="1.6" fill="#f3f3f3" />
              <path d="M7 9 L11 3 L16 3 M18 3 L23 3 L27 9 M7 25 L11 31 L16 31 M18 31 L23 31 L27 25" />
              <path d="M3 13 L7 9 L11 12 M31 13 L27 9 L23 12 M3 21 L7 25 L11 22 M31 21 L27 25 L23 22" />
            </svg>
          </SideTile>
        </SideBar>
      </Main>

      <Toolbar>
        <ToolSection $w={154} $line $pad={11}>
          <ToolLabel $w={51}>Layer :</ToolLabel>
          <ToolLabel $w={68} $red>Konturen</ToolLabel>
          <Chevron $w={19} $h={20} />
        </ToolSection>
        <ToolSection $w={175} $line $pad={8}>
          <ToolLabel $w={72}>Geschoss :</ToolLabel>
          <Disabled><Chevron $w={18} $h={20} $borderless /></Disabled>
        </ToolSection>
        <Grip />
        <ToolSection $w={140} $line $pad={7}>
          <ToolLabel $w={36}>dx =</ToolLabel>
          <NumBox $w={46}>490,80</NumBox>
          <Spinner><SpinPart $up /><SpinPart /></Spinner>
          <ToolLabel $gap={7}>cm</ToolLabel>
        </ToolSection>
        <ToolSection $w={144} $line $pad={8}>
          <ToolLabel $w={36}>dy =</ToolLabel>
          <NumBox $w={46} $center>0,0</NumBox>
          <Spinner><SpinPart $up /><SpinPart /></Spinner>
          <ToolLabel $gap={9}>cm</ToolLabel>
        </ToolSection>
        <ToolSection $w={125} $pad={8}>
          <ToolLabel $w={95} $clip>dx,dy (relativ ka</ToolLabel>
          <Chevron $w={18} $h={22} />
        </ToolSection>
        <Grip />
        {leftTools.map(t => (
          <ToolButton key={t.k} $active={t.a}>
            {t.k === 'abc' ? 'Abc' : <ToolGlyph kind={t.k} />}
          </ToolButton>
        ))}
        <ToolSpacer $w={4} $line />
        <ToolButton $w={38}><ToolGlyph kind="grip" /></ToolButton>
        <ToolSpacer $w={200} />
        {rightTools.map(t => (
          <ToolButton key={t.k} $active={t.a}><ToolGlyph kind={t.k} /></ToolButton>
        ))}
      </Toolbar>

      <StatusBar>
        <StatusCell $w={3} />
        <StatusCell $w={1297}>Drücken Sie F1, um Hilfe zu erhalten.</StatusCell>
        <StatusCell $w={202}>Selektion</StatusCell>
        <StatusCell $w={58}>1:1 sel</StatusCell>
        <StatusCell $w={75}>X:</StatusCell>
        <StatusCell $w={77}>Y:</StatusCell>
        <StatusCell $w={72}>Z:</StatusCell>
        <StatusCell $w={59}>1:100</StatusCell>
        <StatusCell $w={98}>Zentimeter</StatusCell>
        <StatusCell $w={35}>Ein</StatusCell>
        <StatusCell $w={21} $muted>UF</StatusCell>
        <StatusCell $w={35}>NUM</StatusCell>
        <StatusCell $w={16} $muted>RF</StatusCell>
      </StatusBar>
    </>
  );
}
